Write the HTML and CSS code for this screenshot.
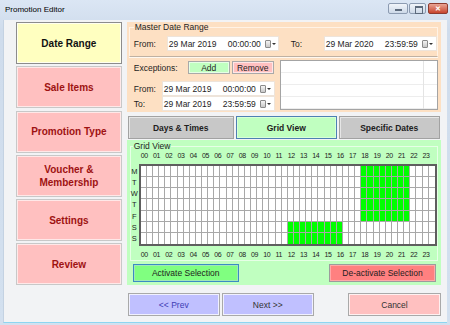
FILE: index.html
```html
<!DOCTYPE html>
<html lang="en">
<head>
    <meta charset="UTF-8">
    <meta name="viewport" content="width=device-width, initial-scale=1.0">
    <title>Promotion Editor</title>
    <link rel="stylesheet" href="styles.css">
</head>
<body>
    <div class="window">
        <div class="titlebar">
            <span class="title">Promotion Editor</span>
            <span class="wbtn min"></span>
            <span class="wbtn max"></span>
            <span class="wbtn close">&#x2715;</span>
        </div>
        <div class="client">
            <div class="nav">
                <div class="navbtn active">Date Range</div>
                <div class="navbtn">Sale Items</div>
                <div class="navbtn">Promotion Type</div>
                <div class="navbtn">Voucher &amp;<br>Membership</div>
                <div class="navbtn">Settings</div>
                <div class="navbtn">Review</div>
            </div>
            <div class="main">
                <div class="master">
                    <fieldset class="range">
                        <legend>Master Date Range</legend>
                        <div class="row">
                            <span class="lbl from">From:</span>
                            <div class="picker">
                                <span class="date">29 Mar 2019</span><span class="time">00:00:00</span><span class="cal"></span><span class="arrow"></span>
                            </div>
                            <span class="lbl to">To:</span>
                            <div class="picker wide">
                                <span class="date">29 Mar 2020</span><span class="time">23:59:59</span><span class="cal"></span><span class="arrow"></span>
                            </div>
                        </div>
                    </fieldset>
                    <div class="exceptions">
                        <div class="excol">
                            <div class="exhead">
                                <span class="lbl">Exceptions:</span>
                                <button class="small add">Add</button>
                                <button class="small remove">Remove</button>
                            </div>
                            <div class="exrow first">
                                <span class="lbl">From:</span>
                                <div class="picker wide">
                                    <span class="date">29 Mar 2019</span><span class="time">00:00:00</span><span class="cal"></span><span class="arrow"></span>
                                </div>
                            </div>
                            <div class="exrow">
                                <span class="lbl">To:</span>
                                <div class="picker wide">
                                    <span class="date">29 Mar 2019</span><span class="time">23:59:59</span><span class="cal"></span><span class="arrow"></span>
                                </div>
                            </div>
                        </div>
                        <div class="listbox"></div>
                    </div>
                </div>

                <div class="tabs">
                    <div class="tab days-tab">Days &amp; Times</div>
                    <div class="tab current">Grid View</div>
                    <div class="tab">Specific Dates</div>
                </div>

                <div class="gridpanel">
                    <fieldset class="gridbox">
                        <legend>Grid View</legend>
                        <div class="hours"></div>
                        <div class="gridrow">
                            <div class="days">
                                <span>M</span><span>T</span><span>W</span><span>T</span><span>F</span><span>S</span><span>S</span>
                            </div>
                            <div class="grid" id="grid"></div>
                        </div>
                        <div class="hours bottom"></div>
                    </fieldset>
                    <div class="actions">
                        <button class="actbtn activate">Activate Selection</button>
                        <button class="actbtn deactivate">De-activate Selection</button>
                    </div>
                </div>

                <div class="footer">
                    <button class="fbtn prev">&lt;&lt; Prev</button>
                    <button class="fbtn next">Next &gt;&gt;</button>
                    <button class="fbtn cancel">Cancel</button>
                </div>
            </div>
        </div>
    </div>

    <script>
        // weekdays 18:00-22:00, weekend 12:00-16:30 (half hour columns)
        function isActive(day, half) {
            if (day < 5) return half >= 36 && half < 44;
            return half >= 24 && half < 33;
        }

        let grid = document.getElementById("grid");
        for (let d = 0; d < 7; d++) {
            for (let h = 0; h < 48; h++) {
                let cell = document.createElement("div");
                cell.className = isActive(d, h) ? "cell on" : "cell";
                grid.appendChild(cell);
            }
        }

        document.querySelectorAll(".hours").forEach(function (row) {
            for (let h = 0; h < 24; h++) {
                let label = document.createElement("span");
                label.textContent = String(h).padStart(2, "0");
                row.appendChild(label);
            }
        });
    </script>
</body>
</html>
```

FILE: styles.css
```css
* {
    box-sizing: border-box;
}
body {
    margin: 0;
    font-family: 'Liberation Sans', Arial, sans-serif;
    font-size: 8.5px;
    color: #1e1e1e;
}
button {
    font-family: inherit;
    font-size: inherit;
    color: inherit;
    padding: 0;
    margin: 0;
}
.window {
    width: 450px;
    height: 325px;
    display: flex;
    flex-direction: column;
    background: linear-gradient(to bottom, #dbe6f4, #cfdcec 30px, #d3e0ef);
    padding: 0 3px 2px 3px;
}
.titlebar {
    height: 20px;
    display: flex;
    align-items: flex-start;
    flex-shrink: 0;
}
.title {
    font-size: 8px;
    margin: 5px 0 0 2px;
    color: #000;
}
.wbtn {
    height: 11px;
    margin-top: 3px;
    border: 1px solid #8c9bb1;
    border-radius: 2px;
    background: linear-gradient(to bottom, #f1f5fa, #cdd9e8);
    position: relative;
}
.min {
    width: 20px;
    margin-left: auto;
}
.min::after {
    content: '';
    position: absolute;
    left: 6px;
    bottom: 2px;
    width: 7px;
    height: 2px;
    background: #5c6a7c;
}
.max {
    width: 17px;
    margin-left: 1px;
}
.max::after {
    content: '';
    position: absolute;
    left: 5px;
    top: 2px;
    width: 6px;
    height: 5px;
    border: 1px solid #5c6a7c;
    border-top-width: 2px;
}
.close {
    width: 20px;
    margin-left: 2px;
    margin-right: -1px;
    border-color: #8e3b2f;
    background: linear-gradient(to bottom, #e9a494, #c8452e);
    color: #fff;
    font-size: 7px;
    line-height: 9px;
    text-align: center;
    font-weight: bold;
}
.client {
    flex: 1;
    display: flex;
    gap: 5px;
    padding: 2px 6px 0 12px;
    background: #f2f3f5;
    border-left: 1px solid #c4d2e2;
    border-bottom: 1px solid #8dd5f0;
}
.nav {
    width: 106px;
    display: flex;
    flex-direction: column;
    gap: 2.3px;
}
.navbtn {
    height: 42px;
    display: flex;
    align-items: center;
    justify-content: center;
    text-align: center;
    font-size: 10px;
    line-height: 13px;
    font-weight: bold;
    color: #9e1212;
    background: #ffc0c0;
    border: 1px solid #c8c8c8;
    box-shadow: inset 0 0 0 1px #ffe8e8;
}
.navbtn.active {
    background: #ffffc0;
    color: #111;
    border-color: #8c8c8c;
    box-shadow: inset 0 0 0 1px #fffff0;
}
.main {
    width: 315px;
    display: flex;
    flex-direction: column;
}

/* master date range */
.master {
    height: 90px;
    flex-shrink: 0;
    background: #fde0c3;
    padding: 0 3px 0 2px;
}
fieldset {
    margin: 0;
    min-width: 0;
}
legend {
    font-size: 8.5px;
    line-height: 10px;
    padding: 0 1px;
}
.range {
    padding: 4px 0 5px 4px;
    border: 1px solid #fff3e6;
    border-bottom: 1px solid #bfb1a3;
    box-shadow: 0 1px 0 #fff8f0;
}
.range legend {
    margin-left: 0;
}
.row {
    display: flex;
    align-items: center;
    height: 15px;
}
.lbl {
    flex-shrink: 0;
}
.from {
    width: 33px;
}
.to {
    width: 33px;
    margin-left: 12px;
}
.picker {
    width: 112px;
    height: 15px;
    display: flex;
    align-items: center;
    padding-left: 1px;
    background: #fff;
    border: 1px solid #eee4da;
    flex-shrink: 0;
}
.picker.wide {
    width: 113px;
}
.picker .date {
    width: 59px;
}
.picker .time {
    width: 37px;
}
.cal {
    width: 6px;
    height: 8px;
    border: 1px solid #8a8a8a;
    border-radius: 1px;
    background: linear-gradient(to bottom, #f4f4f4, #c8c8c8);
}
.arrow {
    margin-left: 1px;
    width: 0;
    height: 0;
    border-left: 2px solid transparent;
    border-right: 2px solid transparent;
    border-top: 2px solid #333;
}
.exceptions {
    display: flex;
    margin-top: 3px;
    padding-left: 5px;
}
.excol {
    width: 141px;
}
.exhead {
    display: flex;
    align-items: center;
    height: 13px;
    margin-top: 1px;
}
.exhead .lbl {
    width: 54px;
}
.small {
    width: 42px;
    height: 13px;
    border: 1px solid #a9a9a9;
    box-shadow: inset 0 0 0 1px rgba(255, 255, 255, 0.6);
}
.add {
    background: #c0ffc0;
}
.remove {
    background: #ffc0c0;
    margin-left: 2px;
}
.exrow {
    display: flex;
    align-items: center;
    height: 15px;
}
.exrow.first {
    margin-top: 7px;
}
.exrow .lbl {
    width: 28px;
}
.listbox {
    width: 158px;
    height: 50px;
    margin-left: 5px;
    border: 1px solid #a4a4a4;
    background:
        linear-gradient(to right, transparent 142px, #e4e4e4 142px, #e4e4e4 143px, transparent 143px),
        repeating-linear-gradient(to bottom, transparent 0, transparent 11px, #ededed 11px, #ededed 12px),
        #fff;
}

/* tabs */
.tabs {
    display: flex;
    gap: 2px;
    height: 23px;
    margin-top: 4px;
    padding-left: 1px;
    flex-shrink: 0;
}
.tab {
    width: 101px;
    display: flex;
    align-items: center;
    justify-content: center;
    font-weight: bold;
    color: #202020;
    background: #c8c8c8;
    border: 1px solid #a2a2a2;
    box-shadow: inset 1px 1px 0 #e6e6e6;
}
.days-tab {
    width: 106px;
}
.tab.current {
    background: #c0ffc0;
    border-color: #4d80b3;
    box-shadow: inset 0 0 0 1px #d8ffd8;
}

/* grid view */
.gridpanel {
    height: 145px;
    margin-top: 1px;
    background: #c0ffc0;
    padding: 1px 3px 4px 3px;
    flex-shrink: 0;
}
.gridbox {
    padding: 0 0 1px 0;
    border: 1px solid #e6ffe6;
}
.gridbox legend {
    margin-left: 2px;
}
.hours {
    display: grid;
    grid-template-columns: repeat(24, 1fr);
    width: 294px;
    margin-left: 10px;
    font-size: 7px;
    letter-spacing: -0.4px;
    line-height: 9px;
    color: #222;
}
.hours.bottom {
    margin-top: 3.5px;
}
.gridrow {
    display: flex;
    height: 82px;
    margin-top: 4px;
}
.days {
    width: 7px;
    margin-right: 1px;
    display: grid;
    grid-template-rows: repeat(7, 1fr);
    align-items: center;
    text-align: center;
    padding: 2px 0;
    font-size: 7.5px;
}
.grid {
    width: 298px;
    height: 82px;
    display: grid;
    grid-template-columns: repeat(48, 1fr);
    grid-template-rows: repeat(7, 1fr);
    border: 2px solid #5e5e5e;
    background: #fff;
}
.cell {
    border-right: 1px solid #a8a8a8;
    border-bottom: 1px solid #a8a8a8;
}
.cell:nth-child(48n) {
    border-right: none;
}
.cell:nth-child(n+289) {
    border-bottom: none;
}
.cell.on {
    background: #00ff00;
}
.actions {
    display: flex;
    justify-content: space-between;
    margin-top: 3px;
    padding: 0 2px 0 3px;
}
.actbtn {
    width: 106px;
    height: 18px;
    border: 1px solid #9c9c9c;
}
.activate {
    background: #80ff80;
    border-color: #3b8ac4;
    box-shadow: inset 0 0 0 1px #9fe8b8;
}
.deactivate {
    width: 107px;
    background: #ff8080;
    box-shadow: inset 0 0 0 1px #ffa8a8;
}

/* footer buttons */
.footer {
    display: flex;
    height: 23px;
    margin-top: 8px;
    padding-left: 1px;
}
.fbtn {
    width: 92px;
    height: 23px;
    border: 1px solid #a9a9a9;
    box-shadow: inset 0 0 0 1px #f0f0ff;
    color: #333;
}
.prev {
    background: #c0c0ff;
    color: #3c3cb4;
}
.next {
    background: #c0c0ff;
    margin-left: 2px;
}
.cancel {
    width: 93px;
    margin-left: auto;
    background: #ffc0c0;
    box-shadow: inset 0 0 0 1px #fff0f0;
}
```
